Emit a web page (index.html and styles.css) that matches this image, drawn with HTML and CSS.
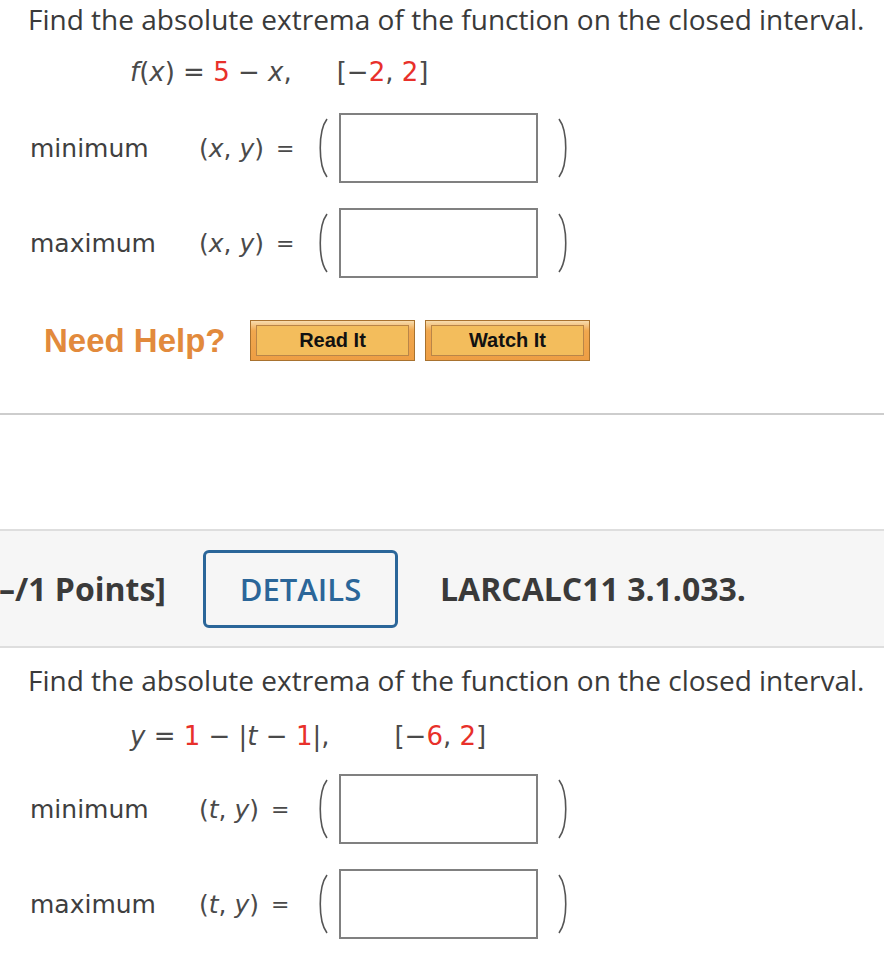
FILE: index.html
```html
<!DOCTYPE html>
<html lang="en">
<head>
<meta charset="utf-8">
<title>Absolute extrema</title>
<link rel="stylesheet" href="styles.css">
</head>
<body>
<main class="page">
  <section class="question">
    <p class="prompt">Find the absolute extrema of the function on the closed interval.</p>
    <p class="formula"><i>f</i>(<i>x</i>) = <span class="red">5</span> − <i>x</i>,<span class="sp1"></span>[−<span class="red">2</span>, <span class="red">2</span>]</p>
    <div class="answer first">
      <span class="label">minimum</span>
      <span class="lhs"><span class="pair">(<i>x</i>, <i>y</i>)</span><span class="eq">=</span></span>
      <svg class="paren" viewBox="0 0 14 62" width="14" height="62"><path d="M12 2 C3 14 3 48 12 60" /></svg>
      <span class="box"></span>
      <svg class="paren close" viewBox="0 0 14 62" width="14" height="62"><path d="M2 2 C11 14 11 48 2 60" /></svg>
    </div>
    <div class="answer">
      <span class="label">maximum</span>
      <span class="lhs"><span class="pair">(<i>x</i>, <i>y</i>)</span><span class="eq">=</span></span>
      <svg class="paren" viewBox="0 0 14 62" width="14" height="62"><path d="M12 2 C3 14 3 48 12 60" /></svg>
      <span class="box"></span>
      <svg class="paren close" viewBox="0 0 14 62" width="14" height="62"><path d="M2 2 C11 14 11 48 2 60" /></svg>
    </div>
    <div class="help">
      <span class="need">Need Help?</span>
      <span class="hbtn"><span class="hbtn-in">Read It</span></span>
      <span class="hbtn"><span class="hbtn-in">Watch It</span></span>
    </div>
  </section>

  <hr class="divider">

  <header class="qhead">
    <span class="points">–/1 Points]</span>
    <span class="details">DETAILS</span>
    <span class="code">LARCALC11 3.1.033.</span>
  </header>

  <section class="question second">
    <p class="prompt">Find the absolute extrema of the function on the closed interval.</p>
    <p class="formula"><i>y</i> = <span class="red">1</span> − |<i>t</i> − <span class="red">1</span>|,<span class="sp2"></span>[−<span class="red">6</span>, <span class="red">2</span>]</p>
    <div class="answer first">
      <span class="label">minimum</span>
      <span class="lhs"><span class="pair">(<i>t</i>, <i>y</i>)</span><span class="eq">=</span></span>
      <svg class="paren" viewBox="0 0 14 62" width="14" height="62"><path d="M12 2 C3 14 3 48 12 60" /></svg>
      <span class="box"></span>
      <svg class="paren close" viewBox="0 0 14 62" width="14" height="62"><path d="M2 2 C11 14 11 48 2 60" /></svg>
    </div>
    <div class="answer">
      <span class="label">maximum</span>
      <span class="lhs"><span class="pair">(<i>t</i>, <i>y</i>)</span><span class="eq">=</span></span>
      <svg class="paren" viewBox="0 0 14 62" width="14" height="62"><path d="M12 2 C3 14 3 48 12 60" /></svg>
      <span class="box"></span>
      <svg class="paren close" viewBox="0 0 14 62" width="14" height="62"><path d="M2 2 C11 14 11 48 2 60" /></svg>
    </div>
  </section>
</main>
</body>
</html>
```

FILE: styles.css
```css
html, body {
  margin: 0;
  padding: 0;
  background: #fff;
}

.page {
  width: 884px;
  overflow: hidden;
  color: #3a3a3a;
}

.question {
  padding-left: 28px;
}

.prompt {
  margin: 0;
  padding-top: 4px;
  font-family: "Open Sans", sans-serif;
  font-size: 28px;
  line-height: 30px;
  color: #3a3a3a;
  white-space: nowrap;
}

.formula {
  margin: 23px 0 0 102px;
  font-family: "DejaVu Sans", Verdana, sans-serif;
  font-size: 26px;
  line-height: 30px;
  color: #4a4a4a;
  white-space: nowrap;
}

.formula i,
.pair i {
  font-style: italic;
}

.red {
  color: #e8302a;
}

.sp1 {
  display: inline-block;
  width: 45px;
}

.sp2 {
  display: inline-block;
  width: 65px;
}

.answer {
  display: flex;
  align-items: center;
  height: 70px;
  margin-top: 25px;
  font-family: "DejaVu Sans", Verdana, sans-serif;
  color: #3f3f3f;
}

.answer.first {
  margin-top: 26px;
}

.second .answer.first {
  margin-top: 23px;
}

.label {
  width: 171px;
  padding-left: 2px;
  box-sizing: border-box;
  font-size: 25px;
}

.lhs {
  display: flex;
  align-items: center;
  gap: 12px;
  width: 116px;
  font-size: 25px;
  color: #4a4a4a;
}

.eq {
  font-size: 22px;
}

.paren {
  flex: none;
}

.paren path {
  fill: none;
  stroke: #555;
  stroke-width: 1.6;
}

.box {
  width: 199px;
  height: 70px;
  margin-left: 10px;
  box-sizing: border-box;
  border: 2px solid #808080;
  background: #fff;
}

.paren.close {
  margin-left: 19px;
}

.help {
  display: flex;
  align-items: center;
  height: 41px;
  margin-top: 42px;
  padding-left: 16px;
}

.need {
  width: 206px;
  font-family: "Liberation Sans", Arial, sans-serif;
  font-weight: bold;
  font-size: 33px;
  color: #e28a3c;
}

.hbtn {
  display: flex;
  width: 165px;
  height: 41px;
  box-sizing: border-box;
  margin-right: 10px;
  padding: 4px 5px 4px 5px;
  border: 1px solid #a8722f;
  background: linear-gradient(#f7dcae 0%, #f0a84f 25%, #ee9e44 100%);
}

.hbtn-in {
  flex: 1;
  display: flex;
  align-items: center;
  justify-content: center;
  border: 1px solid #b98548;
  background: #f3bd5c;
  font-family: "Liberation Sans", Arial, sans-serif;
  font-weight: bold;
  font-size: 20px;
  color: #111;
}

.divider {
  margin: 52px 0 0 0;
  height: 2px;
  border: 0;
  background: #cdcdcd;
}

.qhead {
  display: flex;
  align-items: center;
  height: 119px;
  margin-top: 114px;
  box-sizing: border-box;
  border-top: 2px solid #dedede;
  border-bottom: 2px solid #dedede;
  background: #f6f6f6;
  font-family: "Open Sans", sans-serif;
  font-weight: bold;
  font-size: 32px;
  color: #3a3a3a;
}

.points {
  width: 204px;
  margin-left: -1px;
}

.details {
  display: flex;
  align-items: center;
  justify-content: center;
  width: 195px;
  height: 78px;
  box-sizing: border-box;
  border: 3px solid #2b6699;
  border-radius: 6px;
  font-weight: 600;
  font-size: 31px;
  color: #2b6699;
}

.code {
  margin-left: 42px;
}

.second .prompt {
  margin-top: 13px;
}

.second .formula {
  margin-top: 26px;
}
```
